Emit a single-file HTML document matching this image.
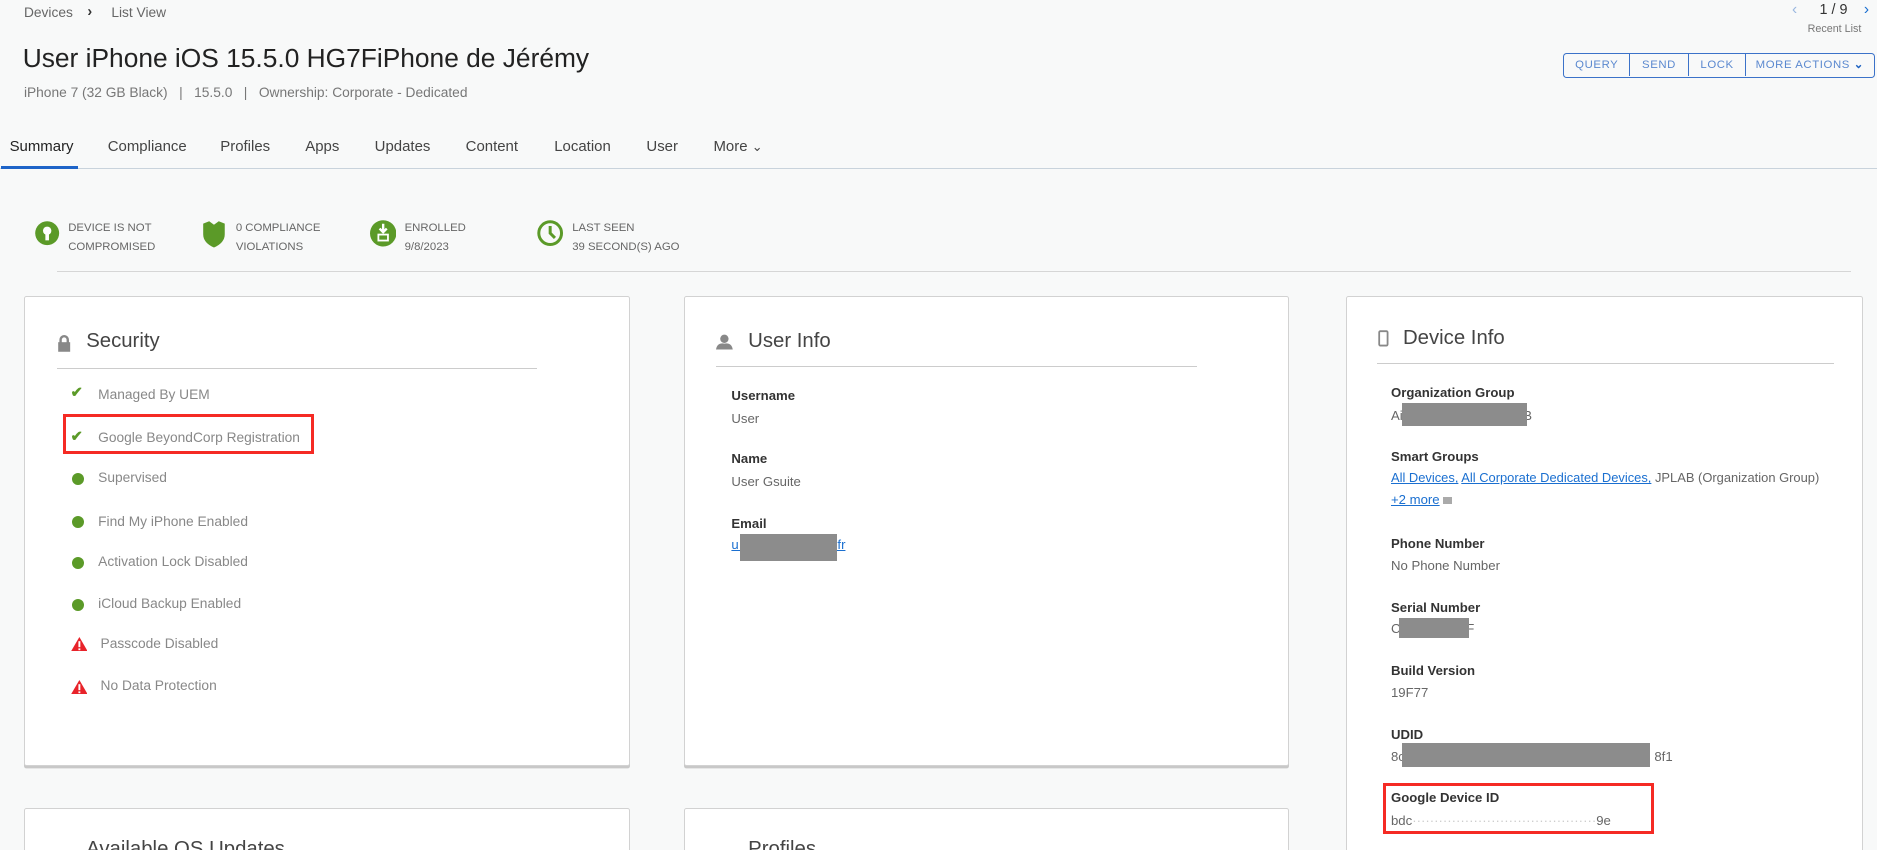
<!DOCTYPE html>
<html><head><meta charset="utf-8"><style>
*{margin:0;padding:0;box-sizing:border-box}
html,body{width:1877px;height:850px;overflow:hidden;background:#f8f9f9}
#r{zoom:1.19707;position:relative;width:1568px;height:710px;font-family:"Liberation Sans",sans-serif;color:#565656}
.a{position:absolute;white-space:nowrap}
.card{position:absolute;background:#fff;border:1px solid #d2d2d2;border-radius:2px;box-shadow:0 2px 0 #c8c8c8}
.h{font-size:17px;color:#444}
.lbl{font-size:11px;font-weight:bold;color:#333}
.val{font-size:11px;color:#666}
.sec{font-size:11.5px;color:#888}
.dot{position:absolute;width:10px;height:10px;border-radius:50%;background:#5b9a28}
.red{position:absolute;border:3px solid #f52a24}
.blk{position:absolute;background:#8c8c8c}
a{color:#1a6fd0;text-decoration:underline}
.tab{position:absolute;top:115px;font-size:12.5px;color:#444}
.st{font-size:9.5px;color:#666;line-height:16px}
</style></head><body><div id="r">
<div class="a" style="left:20px;top:4px;font-size:11.5px;color:#666">Devices</div>
<div class="a" style="left:73px;top:3px;font-size:12px;color:#333;font-weight:bold">›</div>
<div class="a" style="left:93px;top:4px;font-size:11.5px;color:#666">List View</div>
<div class="a" style="left:19px;top:36px;font-size:22px;color:#222">User iPhone iOS 15.5.0 HG7FiPhone de Jérémy</div>
<div class="a" style="left:20px;top:71px;font-size:11.5px;color:#777">iPhone 7 (32 GB Black) &nbsp; | &nbsp; 15.5.0 &nbsp; | &nbsp; Ownership: Corporate - Dedicated</div>
<div class="a" style="left:1497px;top:1px;font-size:13px;color:#9ab8e0">‹</div>
<div class="a" style="left:1520px;top:2px;font-size:12px;color:#333">1 / 9</div>
<div class="a" style="left:1557px;top:1px;font-size:13px;color:#1a6fd0">›</div>
<div class="a" style="left:1510px;top:19px;font-size:9px;color:#777">Recent List</div>
<div class="a" style="left:1306px;top:44px;width:260px;height:21px;border:1px solid #3b72c9;border-radius:3px;font-size:9.5px;color:#5a88cf;letter-spacing:.5px">
<span class="a" style="left:0;width:55px;height:19px;line-height:19px;text-align:center;border-right:1px solid #3b72c9">QUERY</span>
<span class="a" style="left:55px;width:49px;height:19px;line-height:19px;text-align:center;border-right:1px solid #3b72c9">SEND</span>
<span class="a" style="left:104px;width:48px;height:19px;line-height:19px;text-align:center;border-right:1px solid #3b72c9">LOCK</span>
<span class="a" style="left:152px;width:106px;height:19px;line-height:19px;text-align:center">MORE ACTIONS <b style="color:#1a5fc0">⌄</b></span></div>
<div class="tab" style="left:8px;color:#222">Summary</div>
<div class="tab" style="left:90px">Compliance</div>
<div class="tab" style="left:184px">Profiles</div>
<div class="tab" style="left:255px">Apps</div>
<div class="tab" style="left:313px">Updates</div>
<div class="tab" style="left:389px">Content</div>
<div class="tab" style="left:463px">Location</div>
<div class="tab" style="left:540px">User</div>
<div class="tab" style="left:596px">More <span style="font-size:11px">⌄</span></div>
<div class="a" style="left:0;top:140px;width:1568px;height:1px;background:#c9d3dc"></div>
<div class="a" style="left:1px;top:139px;width:64px;height:2px;background:#1e64c8"></div>
<svg class="a" style="left:28px;top:184px" width="22" height="22"><circle cx="11" cy="11" r="10" fill="#5b9a28"/><circle cx="11" cy="9" r="3.5" fill="#fff"/><rect x="9.5" y="10" width="3" height="7" fill="#fff"/></svg>
<div class="a st" style="left:57px;top:183px">DEVICE IS NOT<br>COMPROMISED</div>
<svg class="a" style="left:169px;top:184px" width="20" height="24"><path d="M1 3 L6 1 L10 4 L14 1 L19 3 L19 12 Q19 19 10 23 Q1 19 1 12Z" fill="#5b9a28"/></svg>
<div class="a st" style="left:197px;top:183px">0 COMPLIANCE<br>VIOLATIONS</div>
<svg class="a" style="left:309px;top:183px" width="22" height="24"><circle cx="11" cy="12" r="11" fill="#5b9a28"/><path d="M11 4v7M8 8l3 3 3-3" stroke="#fff" stroke-width="2" fill="none"/><rect x="7" y="13" width="8" height="5" fill="none" stroke="#fff" stroke-width="1.5"/></svg>
<div class="a st" style="left:338px;top:183px">ENROLLED<br>9/8/2023</div>
<svg class="a" style="left:449px;top:184px" width="22" height="22"><circle cx="11" cy="11" r="9.5" fill="none" stroke="#5b9a28" stroke-width="2.5"/><path d="M11 5v6l4 4" stroke="#5b9a28" stroke-width="2.5" fill="none"/></svg>
<div class="a st" style="left:478px;top:183px">LAST SEEN<br>39 SECOND(S) AGO</div>
<div class="a" style="left:48px;top:226px;width:1498px;height:1px;background:#d6d6d6"></div>

<div class="card" style="left:20px;top:247px;width:506px;height:393px"></div>
<svg class="a" style="left:48px;top:280px" width="12" height="14"><rect x="1" y="6" width="10" height="8" fill="#888"/><path d="M3 7V4a3 3 0 0 1 6 0v3" stroke="#888" stroke-width="2" fill="none"/></svg>
<div class="a h" style="left:72px;top:276px">Security</div>
<div class="a" style="left:48px;top:307px;width:401px;height:1px;background:#ccc"></div>
<div class="a" style="left:59px;top:322px;color:#5b9a28;font-size:12px;font-weight:bold">✔</div><div class="a sec" style="left:82px;top:323px">Managed By UEM</div>
<div class="a" style="left:59px;top:358px;color:#5b9a28;font-size:12px;font-weight:bold">✔</div><div class="a sec" style="left:82px;top:359px">Google BeyondCorp Registration</div>
<div class="red" style="left:53px;top:346px;width:209px;height:33px"></div>
<div class="dot" style="left:60px;top:395px"></div><div class="a sec" style="left:82px;top:393px">Supervised</div>
<div class="dot" style="left:60px;top:431px"></div><div class="a sec" style="left:82px;top:429px">Find My iPhone Enabled</div>
<div class="dot" style="left:60px;top:465px"></div><div class="a sec" style="left:82px;top:463px">Activation Lock Disabled</div>
<div class="dot" style="left:60px;top:500px"></div><div class="a sec" style="left:82px;top:498px">iCloud Backup Enabled</div>
<svg class="a" style="left:59px;top:532px" width="14" height="12"><path d="M7 0L14 12H0Z" fill="#e8232a"/><rect x="6.2" y="3.5" width="1.6" height="5" fill="#fff"/><rect x="6.2" y="9.5" width="1.6" height="1.5" fill="#fff"/></svg><div class="a sec" style="left:84px;top:531px">Passcode Disabled</div>
<svg class="a" style="left:59px;top:568px" width="14" height="12"><path d="M7 0L14 12H0Z" fill="#e8232a"/><rect x="6.2" y="3.5" width="1.6" height="5" fill="#fff"/><rect x="6.2" y="9.5" width="1.6" height="1.5" fill="#fff"/></svg><div class="a sec" style="left:84px;top:566px">No Data Protection</div>

<div class="card" style="left:571px;top:247px;width:506px;height:393px"></div>
<svg class="a" style="left:598px;top:279px" width="14" height="14"><circle cx="7" cy="4" r="3.5" fill="#888"/><path d="M0 13Q1 7 7 8Q13 7 14 13Z" fill="#888"/></svg>
<div class="a h" style="left:625px;top:276px">User Info</div>
<div class="a" style="left:598px;top:306px;width:402px;height:1px;background:#ccc"></div>
<div class="a lbl" style="left:611px;top:324px">Username</div><div class="a val" style="left:611px;top:343px">User</div>
<div class="a lbl" style="left:611px;top:377px">Name</div><div class="a val" style="left:611px;top:396px">User Gsuite</div>
<div class="a lbl" style="left:611px;top:431px">Email</div><div class="a val" style="left:611px;top:449px"><a>u&nbsp;&nbsp;&nbsp;&nbsp;&nbsp;&nbsp;&nbsp;&nbsp;&nbsp;&nbsp;&nbsp;&nbsp;&nbsp;&nbsp;&nbsp;&nbsp;&nbsp;&nbsp;&nbsp;&nbsp;&nbsp;&nbsp;&nbsp;&nbsp;&nbsp;&nbsp;&nbsp;fr</a></div>
<div class="blk" style="left:618px;top:446px;width:81px;height:23px"></div>

<div class="card" style="left:1124px;top:247px;width:432px;height:470px"></div>
<svg class="a" style="left:1151px;top:276px" width="9" height="14"><rect x="1" y="1" width="7" height="12" rx="1" fill="none" stroke="#888" stroke-width="1.5"/></svg>
<div class="a h" style="left:1172px;top:273px">Device Info</div>
<div class="a" style="left:1150px;top:303px;width:382px;height:1px;background:#ccc"></div>
<div class="a lbl" style="left:1162px;top:322px">Organization Group</div><div class="a val" style="left:1162px;top:341px">Ai&nbsp;&nbsp;&nbsp;&nbsp;&nbsp;&nbsp;&nbsp;&nbsp;&nbsp;&nbsp;&nbsp;&nbsp;&nbsp;&nbsp;&nbsp;&nbsp;&nbsp;&nbsp;&nbsp;&nbsp;&nbsp;&nbsp;&nbsp;&nbsp;&nbsp;&nbsp;&nbsp;&nbsp;&nbsp;&nbsp;&nbsp;&nbsp;&nbsp;B</div>
<div class="blk" style="left:1171px;top:337px;width:105px;height:19px"></div>
<div class="a lbl" style="left:1162px;top:375px">Smart Groups</div>
<div class="a val" style="left:1162px;top:393px;font-size:10.8px"><a>All Devices,</a> <a>All Corporate Dedicated Devices,</a> JPLAB (Organization Group)</div>
<div class="a val" style="left:1162px;top:411px"><a>+2 more</a> <span style="display:inline-block;width:7px;height:6px;background:#aaa"></span></div>
<div class="a lbl" style="left:1162px;top:448px">Phone Number</div><div class="a val" style="left:1162px;top:466px">No Phone Number</div>
<div class="a lbl" style="left:1162px;top:501px">Serial Number</div><div class="a val" style="left:1162px;top:519px">C&nbsp;&nbsp;&nbsp;&nbsp;&nbsp;&nbsp;&nbsp;&nbsp;&nbsp;&nbsp;&nbsp;&nbsp;&nbsp;&nbsp;&nbsp;&nbsp;&nbsp;&nbsp;F</div>
<div class="blk" style="left:1169px;top:516px;width:58px;height:17px"></div>
<div class="a lbl" style="left:1162px;top:554px">Build Version</div><div class="a val" style="left:1162px;top:572px">19F77</div>
<div class="a lbl" style="left:1162px;top:607px">UDID</div><div class="a val" style="left:1162px;top:626px">8c</div>
<div class="blk" style="left:1171px;top:621px;width:207px;height:20px"></div>
<div class="a val" style="left:1382px;top:626px">8f1</div>
<div class="a lbl" style="left:1162px;top:660px">Google Device ID</div><div class="a val" style="left:1162px;top:679px">bdc<span style="color:#ccc">··········································</span>9e</div>
<div class="red" style="left:1155px;top:654px;width:227px;height:43px"></div>

<div class="card" style="left:20px;top:675px;width:506px;height:60px"></div>
<div class="a h" style="left:72px;top:700px">Available OS Updates</div>
<div class="card" style="left:571px;top:675px;width:506px;height:60px"></div>
<div class="a h" style="left:625px;top:700px">Profiles</div>
</div></body></html>
